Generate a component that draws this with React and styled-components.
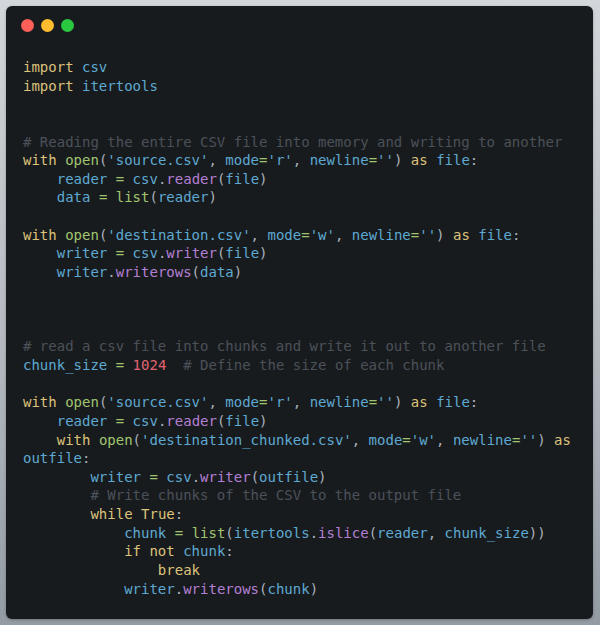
import React from "react";
import styled, { createGlobalStyle } from "styled-components";

const GlobalStyle = createGlobalStyle`
  html, body {
    margin: 0;
    padding: 0;
  }
`;

// token colours, one-dark-ish
const colors = {
  k: "#dcc27a",
  v: "#5ea9d1",
  s: "#5ea9d1",
  f: "#a1c56f",
  m: "#b37fd3",
  n: "#e0636f",
  c: "#4b5159",
  o: "#a1c56f",
  p: "#a9b1bb",
  t: "#a9b1bb",
};

const openArgs = (file, mode) => [
  ["f", "open"], ["p", "("], ["s", `'${file}'`], ["p", ", "],
  ["v", "mode"], ["o", "="], ["s", `'${mode}'`], ["p", ", "],
  ["v", "newline"], ["o", "="], ["s", "''"], ["p", ")"],
];

const lines = [
  [["k", "import"], ["t", " "], ["v", "csv"]],
  [["k", "import"], ["t", " "], ["v", "itertools"]],
  [],
  [],
  [["c", "# Reading the entire CSV file into memory and writing to another"]],
  [["k", "with"], ["t", " "], ...openArgs("source.csv", "r"), ["t", " "], ["k", "as"], ["t", " "], ["v", "file"], ["p", ":"]],
  [["t", "    "], ["v", "reader"], ["t", " "], ["o", "="], ["t", " "], ["v", "csv"], ["p", "."], ["m", "reader"], ["p", "("], ["v", "file"], ["p", ")"]],
  [["t", "    "], ["v", "data"], ["t", " "], ["o", "="], ["t", " "], ["f", "list"], ["p", "("], ["v", "reader"], ["p", ")"]],
  [],
  [["k", "with"], ["t", " "], ...openArgs("destination.csv", "w"), ["t", " "], ["k", "as"], ["t", " "], ["v", "file"], ["p", ":"]],
  [["t", "    "], ["v", "writer"], ["t", " "], ["o", "="], ["t", " "], ["v", "csv"], ["p", "."], ["m", "writer"], ["p", "("], ["v", "file"], ["p", ")"]],
  [["t", "    "], ["v", "writer"], ["p", "."], ["m", "writerows"], ["p", "("], ["v", "data"], ["p", ")"]],
  [],
  [],
  [],
  [["c", "# read a csv file into chunks and write it out to another file"]],
  [["v", "chunk_size"], ["t", " "], ["o", "="], ["t", " "], ["n", "1024"], ["t", "  "], ["c", "# Define the size of each chunk"]],
  [],
  [["k", "with"], ["t", " "], ...openArgs("source.csv", "r"), ["t", " "], ["k", "as"], ["t", " "], ["v", "file"], ["p", ":"]],
  [["t", "    "], ["v", "reader"], ["t", " "], ["o", "="], ["t", " "], ["v", "csv"], ["p", "."], ["m", "reader"], ["p", "("], ["v", "file"], ["p", ")"]],
  [["t", "    "], ["k", "with"], ["t", " "], ...openArgs("destination_chunked.csv", "w"), ["t", " "], ["k", "as"], ["t", " "], ["v", "outfile"], ["p", ":"]],
  [["t", "        "], ["v", "writer"], ["t", " "], ["o", "="], ["t", " "], ["v", "csv"], ["p", "."], ["m", "writer"], ["p", "("], ["v", "outfile"], ["p", ")"]],
  [["t", "        "], ["c", "# Write chunks of the CSV to the output file"]],
  [["t", "        "], ["k", "while"], ["t", " "], ["k", "True"], ["p", ":"]],
  [["t", "            "], ["v", "chunk"], ["t", " "], ["o", "="], ["t", " "], ["f", "list"], ["p", "("], ["v", "itertools"], ["p", "."], ["m", "islice"], ["p", "("], ["v", "reader"], ["p", ", "], ["v", "chunk_size"], ["p", "))"]],
  [["t", "            "], ["k", "if not"], ["t", " "], ["v", "chunk"], ["p", ":"]],
  [["t", "                "], ["k", "break"]],
  [["t", "            "], ["v", "writer"], ["p", "."], ["m", "writerows"], ["p", "("], ["v", "chunk"], ["p", ")"]],
];

const App = () => {
  return (
    <Page>
      <GlobalStyle />
      <Window>
        <TitleBar>
          <Dot color="#fe5f57" />
          <Dot color="#febc2e" />
          <Dot color="#29c840" />
        </TitleBar>
        <Code>
          {lines.map((line, i) => (
            <Line key={i}>
              {line.length === 0
                ? "\n"
                : line.map(([type, text], j) => (
                    <Token key={j} kind={type}>
                      {text}
                    </Token>
                  ))}
            </Line>
          ))}
        </Code>
      </Window>
    </Page>
  );
};

const Page = styled.div`
  box-sizing: border-box;
  height: 625px;
  padding: 6px 7px 6px 6px;
  display: flex;
  background: linear-gradient(180deg, #d3d6da 0%, #b4bac0 55%, #939ba3 100%);
`;

const Window = styled.div`
  flex: 1;
  display: flex;
  flex-direction: column;
  background: #181b1e;
  border-radius: 6px;
  padding: 13px 16px 0 15px;
  box-shadow: 0 1px 3px rgba(0, 0, 0, 0.25);
`;

const TitleBar = styled.div`
  display: flex;
  gap: 7px;
`;

const Dot = styled.span`
  width: 13px;
  height: 13px;
  border-radius: 50%;
  background: ${(p) => p.color};
`;

const Code = styled.pre`
  margin: 26px 0 0;
  padding-left: 2px;
  font-family: "DejaVu Sans Mono", "Liberation Mono", monospace;
  font-size: 14px;
  line-height: 18.62px;
  white-space: pre-wrap;
  color: #a9b1bb;
`;

const Line = styled.div`
  min-height: 18.62px;
`;

const Token = styled.span`
  color: ${(p) => colors[p.kind]};
`;

export default App;
